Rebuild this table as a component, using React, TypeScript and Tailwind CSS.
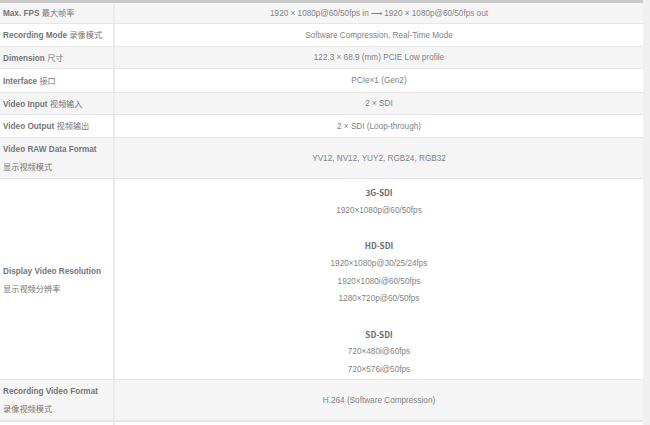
const rows: { en: string; zh: string; value: string; h: string; bg: string; twoLine?: boolean }[] = [
  { en: "Max. FPS", zh: "最大帧率", value: "1920 × 1080p@60/50fps in ⟶ 1920 × 1080p@60/50fps out", h: "h-[21px]", bg: "bg-[#f5f5f5]" },
  { en: "Recording Mode", zh: "录像模式", value: "Software Compression, Real-Time Mode", h: "h-[23px]", bg: "bg-white" },
  { en: "Dimension", zh: "尺寸", value: "122.3 × 68.9 (mm) PCIE Low profile", h: "h-[22px]", bg: "bg-[#f5f5f5]" },
  { en: "Interface", zh: "接口", value: "PCIe×1 (Gen2)", h: "h-[24px]", bg: "bg-white" },
  { en: "Video Input", zh: "视频输入", value: "2 × SDI", h: "h-[22px]", bg: "bg-[#f5f5f5]" },
  { en: "Video Output", zh: "视频输出", value: "2 × SDI (Loop-through)", h: "h-[23px]", bg: "bg-white" },
  { en: "Video RAW Data Format", zh: "显示视频模式", value: "YV12, NV12, YUY2, RGB24, RGB32", h: "h-[41px]", bg: "bg-[#f5f5f5]", twoLine: true },
];

const font = { fontFamily: '"Liberation Sans", "Noto Sans CJK SC", sans-serif' };

function Row({ en, zh, value, h, bg, twoLine }: (typeof rows)[number]) {
  return (
    <div className={`flex ${h} ${bg} border-b border-[#e6e6e6]`}>
      <div className="w-[115px] shrink-0 border-r-2 border-[#ebebeb] flex flex-col justify-center pl-[3px] pt-[2px] text-[#757575] leading-[18px]">
        {twoLine ? (
          <>
            <span className="font-bold">{en}</span>
            <span>{zh}</span>
          </>
        ) : (
          <span>
            <span className="font-bold">{en}</span> {zh}
          </span>
        )}
      </div>
      <div className="flex-1 flex items-center justify-center pt-[2px] text-[#838383]">{value}</div>
    </div>
  );
}

function Head({ children }: { children: string }) {
  return (
    <div className="font-semibold text-[#6e6e6e]" style={{ fontFamily: '"Noto Sans CJK SC", sans-serif' }}>
      {children}
    </div>
  );
}

export default function App() {
  return (
    <div className="w-[650px] h-[425px] overflow-hidden bg-[#f0f0f0] text-[8.2px]" style={font}>
      <div className="w-[643px] bg-white border-t-[3px] border-[#c9c9c9]">
        {rows.map((r) => (
          <Row key={r.en} {...r} />
        ))}
        <div className="flex h-[201px] bg-white border-b border-[#e6e6e6]">
          <div className="w-[115px] shrink-0 border-r-2 border-[#ebebeb] flex flex-col justify-center pl-[3px] pt-[3px] text-[#757575] leading-[18px]">
            <span className="font-bold">Display Video Resolution</span>
            <span>显示视频分辨率</span>
          </div>
          <div className="flex-1 flex flex-col items-center justify-center text-[#838383] leading-[17.8px] pt-[5px]">
            <Head>3G-SDI</Head>
            <div>1920×1080p@60/50fps</div>
            <div className="h-[17.8px]" />
            <Head>HD-SDI</Head>
            <div>1920×1080p@30/25/24fps</div>
            <div>1920×1080i@60/50fps</div>
            <div>1280×720p@60/50fps</div>
            <div className="h-[17.8px]" />
            <Head>SD-SDI</Head>
            <div>720×480i@60fps</div>
            <div>720×576i@50fps</div>
          </div>
        </div>
        <div className="flex h-[42px] bg-[#f5f5f5] border-b-2 border-[#e6e6e6]">
          <div className="w-[115px] shrink-0 border-r-2 border-[#ebebeb] flex flex-col justify-center pl-[3px] pt-[2px] text-[#757575] leading-[18px]">
            <span className="font-bold">Recording Video Format</span>
            <span>录像视频模式</span>
          </div>
          <div className="flex-1 flex items-center justify-center pt-[2px] text-[#838383]">H.264 (Software Compression)</div>
        </div>
        <div className="flex h-[10px] bg-white">
          <div className="w-[115px] shrink-0 border-r-2 border-[#ebebeb]" />
        </div>
      </div>
    </div>
  );
}
